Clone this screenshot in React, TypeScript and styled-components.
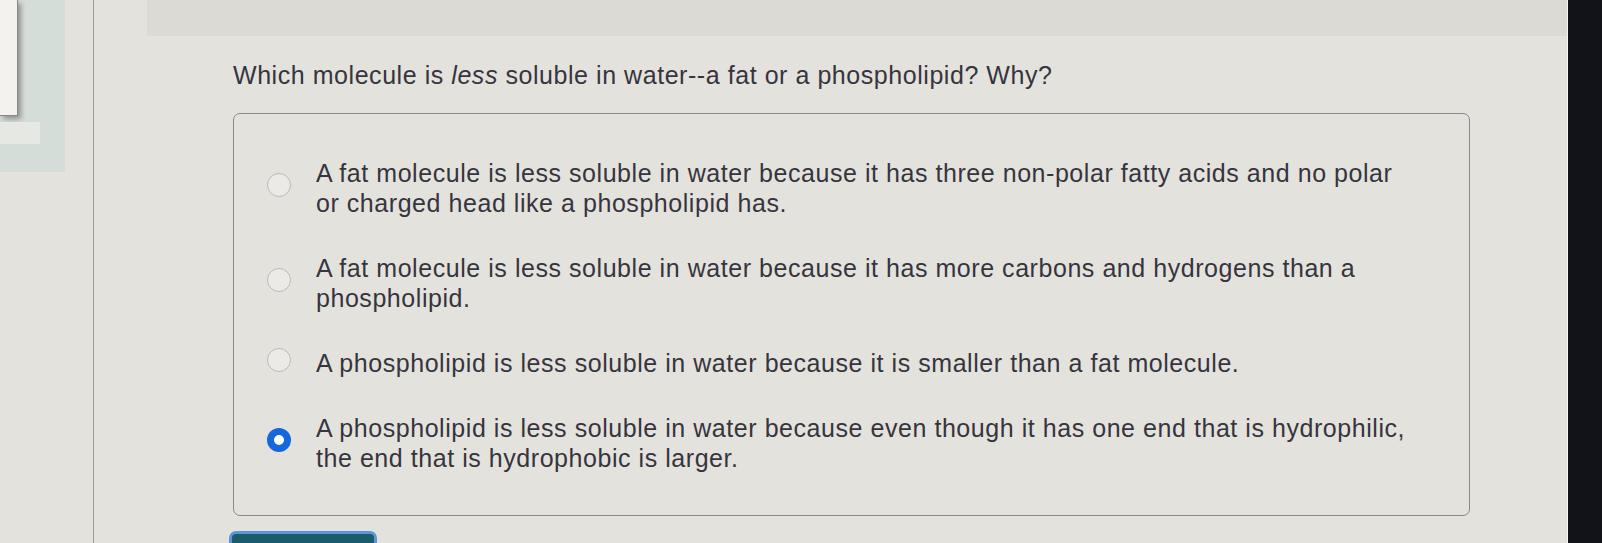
import React from "react";
import styled, { createGlobalStyle } from "styled-components";

const Global = createGlobalStyle`
  html, body { margin: 0; padding: 0; }
  body {
    background: #e4e2dd;
    font-family: "Liberation Sans", Arial, sans-serif;
    overflow: hidden;
  }
`;

const Screen = styled.div`
  width: 1602px;
  height: 543px;
  display: flex;
  background: #e4e2dd;
  overflow: hidden;
`;

const LeftRail = styled.div`
  width: 93px;
  flex: none;
  border-right: 1px solid #9c9c9c;
  display: flex;
  align-items: flex-start;
`;

const GreenPanel = styled.div`
  width: 65px;
  height: 172px;
  background: #d5ddd8;
  display: flex;
  flex-direction: column;
`;

const SideCard = styled.div`
  width: 17px;
  height: 115px;
  background: #f3f2ef;
  border-right: 1px solid #8a8785;
  border-bottom: 1px solid #8a8785;
  box-shadow: 3px 3px 5px rgba(60, 55, 55, 0.45);
`;

const CardGlow = styled.div`
  width: 40px;
  height: 22px;
  margin-top: 6px;
  background: #e6e8e4;
`;

const Main = styled.div`
  flex: 1;
  display: flex;
  flex-direction: column;
`;

const TopBand = styled.div`
  height: 36px;
  margin-left: 53px;
  background: #dcdad5;
  flex: none;
`;

const Content = styled.div`
  padding-left: 139px;
  display: flex;
  flex-direction: column;
`;

const Question = styled.div`
  font-size: 25px;
  letter-spacing: 0.55px;
  line-height: 30px;
  color: #36353e;
  margin-top: 24px;
  height: 30px;
  white-space: nowrap;
  em { font-style: italic; }
`;

const AnswerBox = styled.div`
  margin-top: 23px;
  width: 1237px;
  height: 403px;
  box-sizing: border-box;
  border: 1.5px solid #8a8a8a;
  border-radius: 7px;
  padding: 44px 0 0 33px;
  display: flex;
  flex-direction: column;
  gap: 35px;
`;

const Option = styled.label`
  display: flex;
  align-items: center;
  gap: 25px;
  cursor: pointer;
`;

const Radio = styled.span<{ $checked?: boolean }>`
  flex: none;
  width: 24px;
  height: 24px;
  box-sizing: border-box;
  border-radius: 50%;
  margin-top: -6px;
  background: ${(p) => (p.$checked ? "#ffffff" : "#ebeae6")};
  border: ${(p) => (p.$checked ? "7.5px solid #1467dc" : "1.5px solid #bab9b6")};
`;

const OptionText = styled.span`
  font-size: 25px;
  letter-spacing: 0.55px;
  line-height: 30px;
  color: #36353e;
  white-space: nowrap;
`;

const SubmitButton = styled.div`
  margin-top: 15px;
  margin-left: -4px;
  width: 148px;
  height: 40px;
  box-sizing: border-box;
  border: 3px solid #5e95d8;
  border-radius: 7px;
  background: #1b5c6a;
`;

const Bezel = styled.div`
  width: 34px;
  flex: none;
  background: #111318;
  border-left: 1px solid #f4f4f2;
`;

const options: { lines: string[]; checked?: boolean }[] = [
  {
    lines: [
      "A fat molecule is less soluble in water because it has three non-polar fatty acids and no polar",
      "or charged head like a phospholipid has.",
    ],
  },
  {
    lines: [
      "A fat molecule is less soluble in water because it has more carbons and hydrogens than a",
      "phospholipid.",
    ],
  },
  {
    lines: ["A phospholipid is less soluble in water because it is smaller than a fat molecule."],
  },
  {
    lines: [
      "A phospholipid is less soluble in water because even though it has one end that is hydrophilic,",
      "the end that is hydrophobic is larger.",
    ],
    checked: true,
  },
];

export default function App() {
  return (
    <>
      <Global />
      <Screen>
        <LeftRail>
          <GreenPanel>
            <SideCard />
            <CardGlow />
          </GreenPanel>
        </LeftRail>
        <Main>
          <TopBand />
          <Content>
            <Question>
              Which molecule is <em>less</em> soluble in water--a fat or a phospholipid? Why?
            </Question>
            <AnswerBox>
              {options.map((o, i) => (
                <Option key={i}>
                  <Radio $checked={o.checked} />
                  <OptionText>
                    {o.lines.map((l, j) => (
                      <React.Fragment key={j}>
                        {j > 0 && <br />}
                        {l}
                      </React.Fragment>
                    ))}
                  </OptionText>
                </Option>
              ))}
            </AnswerBox>
            <SubmitButton />
          </Content>
        </Main>
        <Bezel />
      </Screen>
    </>
  );
}
